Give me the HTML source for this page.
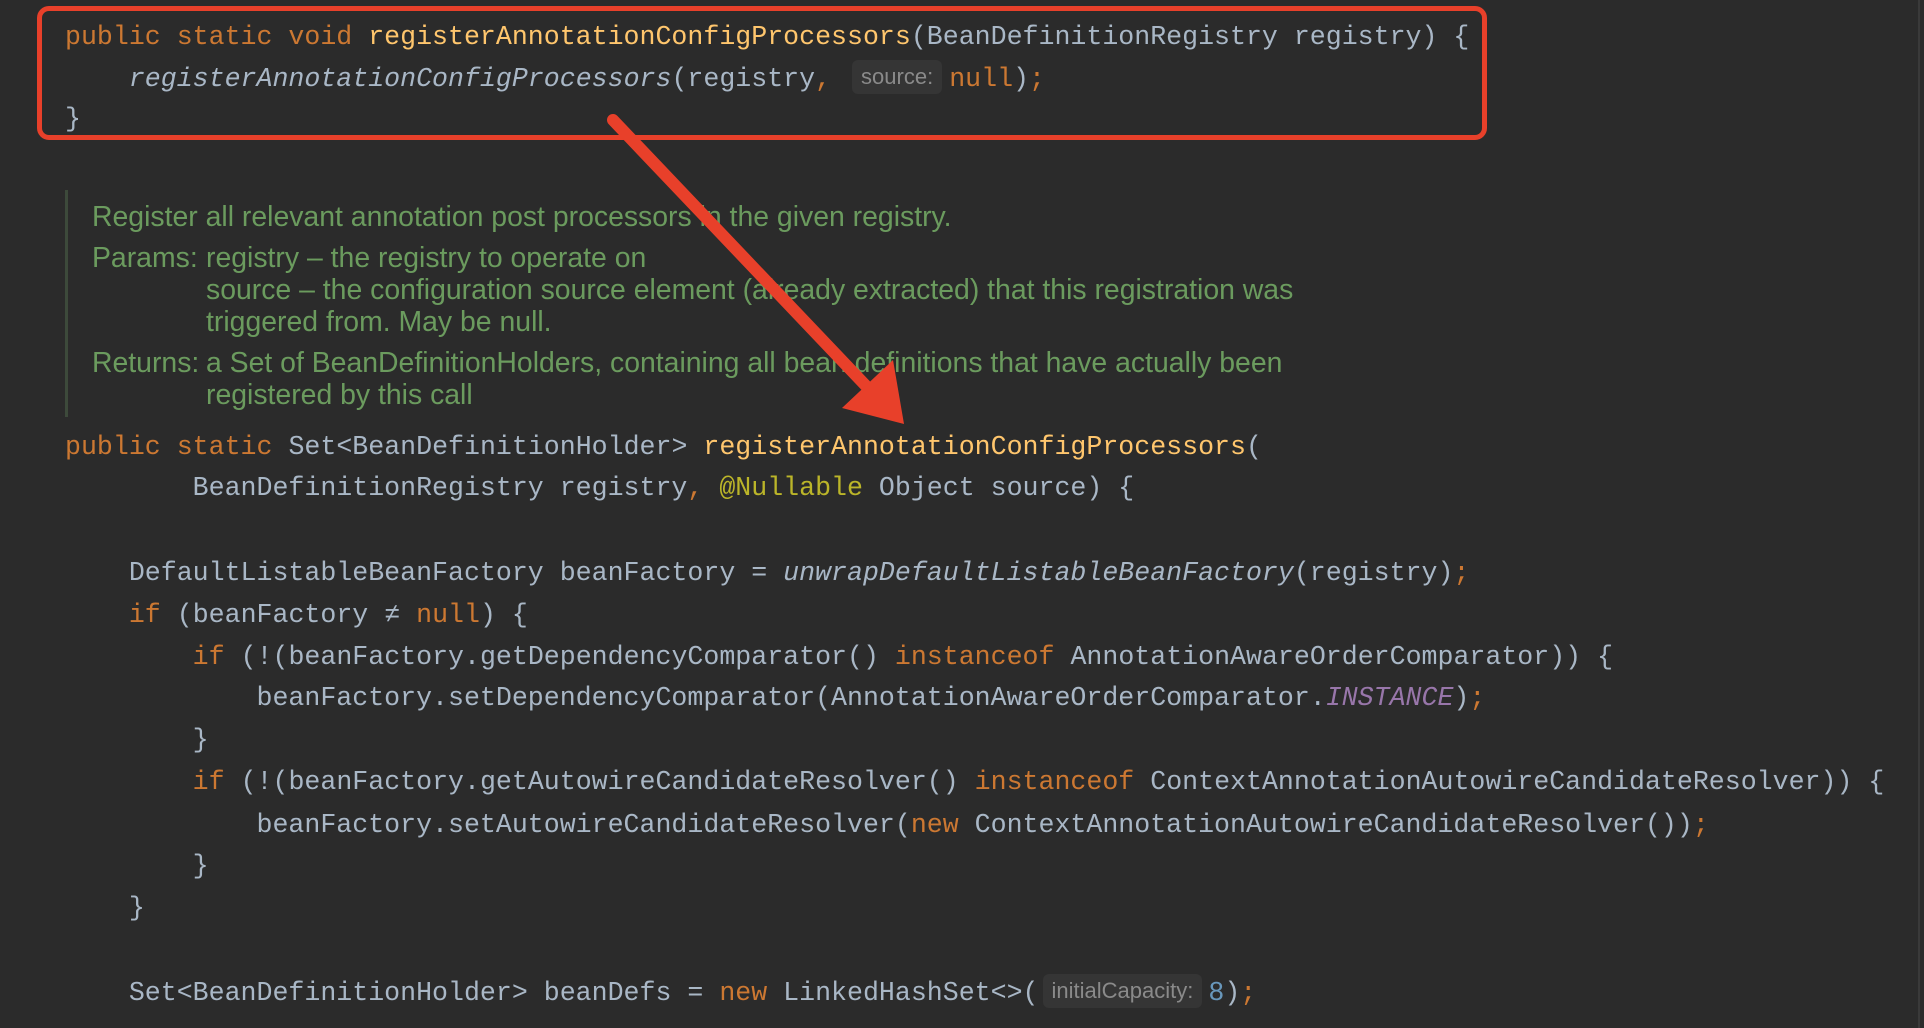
<!DOCTYPE html>
<html><head><meta charset="utf-8"><style>
html,body{margin:0;padding:0;background:#2b2b2b;width:1924px;height:1028px;overflow:hidden;position:relative}
.l{position:absolute;left:65px;height:42px;line-height:42px;font-family:"Liberation Mono",monospace;font-size:26.6px;color:#a9b7c6;white-space:pre}
.k{color:#cc7832}.m{color:#ffc66d}.a{color:#bbb529}.i{font-style:italic}.p{color:#9876aa;font-style:italic}.n{color:#6897bb}
.h{display:inline-block;font-family:"Liberation Sans",sans-serif;font-size:22px;color:#8a8a8a;background:#353535;border-radius:6px;height:34px;line-height:34px;padding:0 9px;vertical-align:middle;position:relative;top:-2px}
.d{position:absolute;left:92px;font-family:"Liberation Sans",sans-serif;font-size:28.4px;color:#6b9b5e;white-space:pre;height:32px;line-height:32px}
</style></head><body>
<div style="position:absolute;left:1918px;top:0;width:2px;height:1028px;background:#3a3a3a"></div>
<div style="position:absolute;left:65px;top:190px;width:3px;height:227px;background:#3d4a3b"></div>

<div class="l" style="top:16px"><span class="k">public static void </span><span class="m">registerAnnotationConfigProcessors</span>(BeanDefinitionRegistry registry) {</div>
<div class="l" style="top:58px">    <span class="i">registerAnnotationConfigProcessors</span>(registry<span class="k">,</span> <span class="h" style="margin-left:5px;margin-right:7px">source:</span><span class="k">null</span>)<span class="k">;</span></div>
<div class="l" style="top:98px">}</div>

<div class="d" style="top:201px">Register all relevant annotation post processors in the given registry.</div>
<div class="d" style="top:242px">Params:</div>
<div class="d" style="top:242px;left:206px">registry – the registry to operate on</div>
<div class="d" style="top:274px;left:206px">source – the configuration source element (already extracted) that this registration was</div>
<div class="d" style="top:306px;left:206px">triggered from. May be null.</div>
<div class="d" style="top:347px">Returns:</div>
<div class="d" style="top:347px;left:206px">a Set of BeanDefinitionHolders, containing all bean definitions that have actually been</div>
<div class="d" style="top:379px;left:206px">registered by this call</div>

<div class="l" style="top:426px"><span class="k">public static </span>Set&lt;BeanDefinitionHolder&gt; <span class="m">registerAnnotationConfigProcessors</span>(</div>
<div class="l" style="top:467px">        BeanDefinitionRegistry registry<span class="k">, </span><span class="a">@Nullable</span> Object source) {</div>
<div class="l" style="top:552px">    DefaultListableBeanFactory beanFactory = <span class="i">unwrapDefaultListableBeanFactory</span>(registry)<span class="k">;</span></div>
<div class="l" style="top:594px">    <span class="k">if </span>(beanFactory ≠ <span class="k">null</span>) {</div>
<div class="l" style="top:636px">        <span class="k">if </span>(!(beanFactory.getDependencyComparator() <span class="k">instanceof </span>AnnotationAwareOrderComparator)) {</div>
<div class="l" style="top:677px">            beanFactory.setDependencyComparator(AnnotationAwareOrderComparator.<span class="p">INSTANCE</span>)<span class="k">;</span></div>
<div class="l" style="top:719px">        }</div>
<div class="l" style="top:761px">        <span class="k">if </span>(!(beanFactory.getAutowireCandidateResolver() <span class="k">instanceof </span>ContextAnnotationAutowireCandidateResolver)) {</div>
<div class="l" style="top:804px">            beanFactory.setAutowireCandidateResolver(<span class="k">new </span>ContextAnnotationAutowireCandidateResolver())<span class="k">;</span></div>
<div class="l" style="top:845px">        }</div>
<div class="l" style="top:887px">    }</div>
<div class="l" style="top:972px">    Set&lt;BeanDefinitionHolder&gt; beanDefs = <span class="k">new </span>LinkedHashSet&lt;&gt;(<span class="h" style="margin-left:4px;margin-right:6px">initialCapacity:</span><span class="n">8</span>)<span class="k">;</span></div>

<div style="position:absolute;left:37px;top:6px;width:1440px;height:124px;border:5px solid #e8402a;border-radius:12px"></div>
<svg style="position:absolute;left:0;top:0" width="1924" height="1028">
<line x1="613" y1="120" x2="868" y2="388" stroke="#e8402a" stroke-width="12" stroke-linecap="round"/>
<polygon points="904,424 842,408 893,360" fill="#e8402a"/>
</svg>
</body></html>
